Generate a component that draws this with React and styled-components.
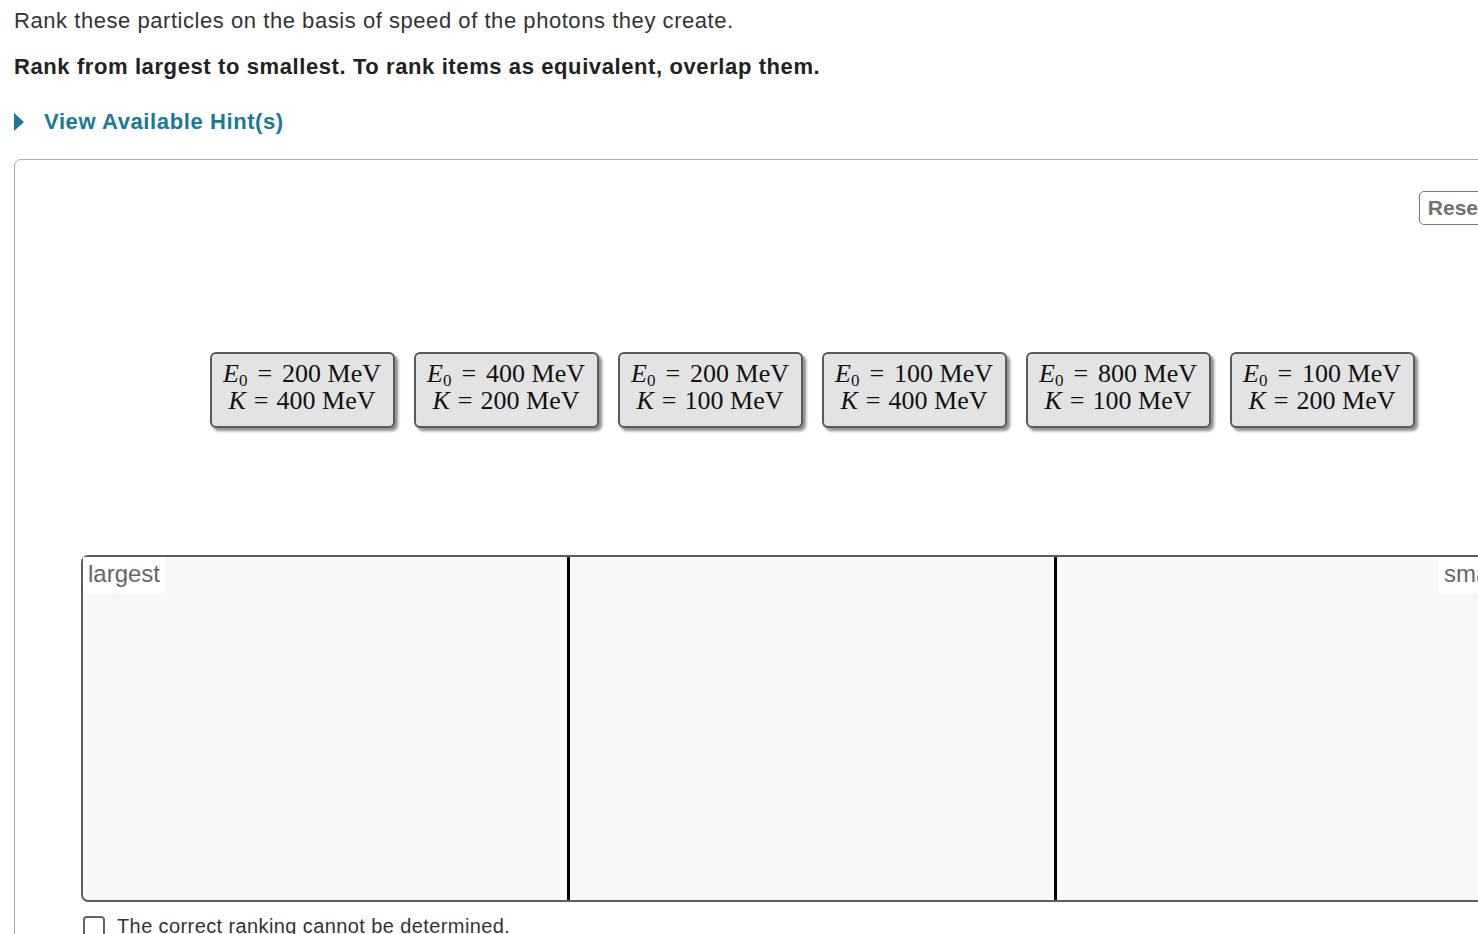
import React from "react";
import styled, { createGlobalStyle } from "styled-components";

const GlobalStyle = createGlobalStyle`
  html, body {
    margin: 0;
    padding: 0;
    overflow: hidden;
    background: #fff;
  }
  body {
    font-family: "Liberation Sans", Arial, sans-serif;
    color: #333;
  }
`;

const Page = styled.div`
  width: 1640px;
  padding: 6px 0 0 14px;
`;

const Prompt = styled.p`
  margin: 0;
  font-size: 22px;
  letter-spacing: 0.55px;
  line-height: 30px;
  color: #333;
`;

const Instruction = styled.p`
  margin: 16px 0 0;
  font-size: 22px;
  letter-spacing: 0.6px;
  line-height: 30px;
  font-weight: bold;
  color: #222;
`;

const HintToggle = styled.div`
  display: flex;
  align-items: center;
  gap: 20px;
  margin-top: 25px;
  font-size: 22px;
  letter-spacing: 0.6px;
  font-weight: bold;
  color: #18799a;
  line-height: 30px;
`;

const Triangle = styled.span`
  width: 0;
  height: 0;
  border-top: 9px solid transparent;
  border-bottom: 9px solid transparent;
  border-left: 10px solid #18799a;
`;

const Panel = styled.div`
  margin-top: 22px;
  width: 1594px;
  border: 1px solid #aaa;
  border-radius: 7px;
  padding-bottom: 40px;
`;

const Toolbar = styled.div`
  display: flex;
  justify-content: flex-end;
  padding: 31px 20px 0 0;
`;

const ResetButton = styled.button`
  height: 34px;
  padding: 0 14px 0 8px;
  border: 1px solid #777;
  border-radius: 5px;
  background: #fff;
  font-family: "Liberation Sans", Arial, sans-serif;
  font-size: 21px;
  font-weight: bold;
  color: #707070;
  margin-right: 89px;
`;

const CardRow = styled.div`
  display: flex;
  justify-content: center;
  gap: 19px;
  margin-top: 127px;
`;

const Card = styled.div`
  box-sizing: border-box;
  width: 185px;
  height: 76px;
  padding-bottom: 7px;
  border: 2px solid #5a5a5a;
  border-radius: 6px;
  background: #e3e3e3;
  box-shadow: 3px 3px 3px rgba(0, 0, 0, 0.45);
  display: flex;
  flex-direction: column;
  align-items: center;
  justify-content: center;
  font-family: "Liberation Serif", "Times New Roman", serif;
  font-size: 26px;
  color: #111;
`;

const MathLine = styled.div`
  height: 27px;
  line-height: 27px;
  white-space: nowrap;
`;

const Var = styled.i`
  font-style: italic;
`;

const Sub = styled.span`
  position: relative;
  top: 4px;
  font-size: 17px;
`;

const Eq = styled.span`
  margin: 0 ${(p) => p.$gap || 8}px;
`;

const RankBox = styled.div`
  position: relative;
  margin: 127px 66px 0;
  height: 347px;
  box-sizing: border-box;
  border: 2px solid #5c5c68;
  border-radius: 7px;
  background: #f7f7f7;
  display: grid;
  grid-template-columns: 484px 487px 1fr;
`;

const Cell = styled.div`
  border-left: ${(p) => (p.$first ? "none" : "3px solid #000")};
`;

const EndLabel = styled.span`
  position: absolute;
  top: 0;
  ${(p) => (p.$right ? "right: 4px;" : "left: 0;")}
  padding: 2px 5px 4px;
  background: #fff;
  font-size: 24px;
  line-height: 30px;
  color: #666;
`;

const CheckRow = styled.label`
  display: flex;
  align-items: center;
  gap: 12px;
  margin: 13px 0 0 68px;
  font-size: 20px;
  letter-spacing: 0.4px;
  color: #333;
`;

const Box = styled.span`
  width: 18px;
  height: 18px;
  border: 2px solid #666;
  border-radius: 4px;
  background: #fff;
`;

const items = [
  ["200", "400"],
  ["400", "200"],
  ["200", "100"],
  ["100", "400"],
  ["800", "100"],
  ["100", "200"],
];

export default function App() {
  return (
    <Page>
      <GlobalStyle />
      <Prompt>Rank these particles on the basis of speed of the photons they create.</Prompt>
      <Instruction>Rank from largest to smallest. To rank items as equivalent, overlap them.</Instruction>
      <HintToggle>
        <Triangle />
        View Available Hint(s)
      </HintToggle>
      <Panel>
        <Toolbar>
          <ResetButton>Reset</ResetButton>
        </Toolbar>
        <CardRow>
          {items.map(([e, k], i) => (
            <Card key={i}>
              <MathLine>
                <Var>E</Var>
                <Sub>0</Sub>
                <Eq $gap={10}>=</Eq>
                {e} MeV
              </MathLine>
              <MathLine>
                <Var>K</Var>
                <Eq>=</Eq>
                {k} MeV
              </MathLine>
            </Card>
          ))}
        </CardRow>
        <RankBox>
          <Cell $first />
          <Cell />
          <Cell />
          <EndLabel>largest</EndLabel>
          <EndLabel $right>smallest</EndLabel>
        </RankBox>
        <CheckRow>
          <Box />
          The correct ranking cannot be determined.
        </CheckRow>
      </Panel>
    </Page>
  );
}
